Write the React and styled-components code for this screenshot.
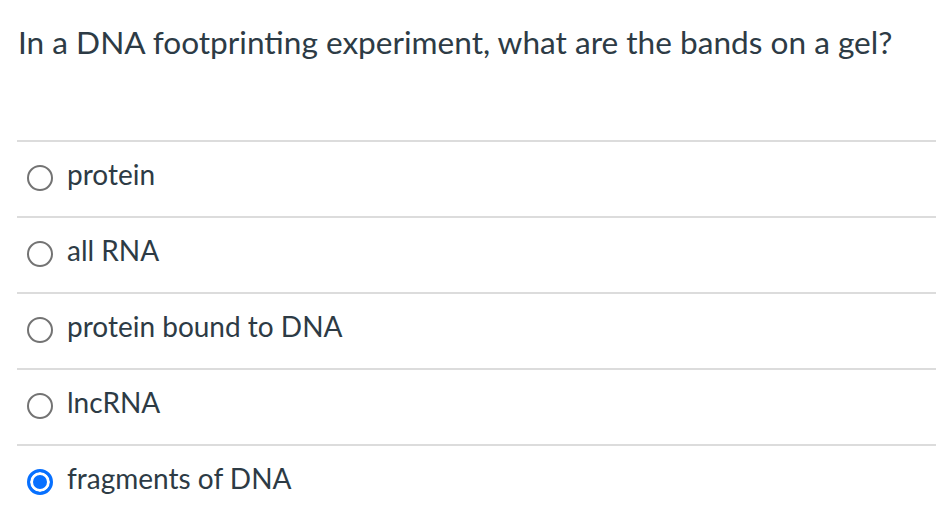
import React, { useState } from "react";
import styled, { createGlobalStyle } from "styled-components";

const GlobalStyle = createGlobalStyle`
  body {
    margin: 0;
    background: #fff;
    font-family: "Lato", "Liberation Sans", sans-serif;
    color: #2d3b45;
  }
`;

const Page = styled.div`
  padding-left: 17px;
`;

const Question = styled.h1`
  margin: 0;
  padding: 22px 0 0 1px;
  height: 140px;
  box-sizing: border-box;
  font-size: 31.6px;
  font-weight: 400;
  line-height: 40px;
  color: #2d3b45;
`;

const Answers = styled.div`
  display: flex;
  flex-direction: column;
`;

const Answer = styled.label`
  display: flex;
  align-items: center;
  gap: 14px;
  height: 76px;
  box-sizing: border-box;
  border-top: 2px solid #dcdcdc;
  padding: 0 0 11px 10px;
  font-size: 28px;
  cursor: pointer;
`;

const Radio = styled.span`
  width: 26px;
  height: 26px;
  box-sizing: border-box;
  border-radius: 50%;
  border: ${(p) => (p.$checked ? "3px solid #0770ff" : "2px solid #737373")};
  background: ${(p) => (p.$checked ? "#0770ff" : "#fff")};
  box-shadow: ${(p) => (p.$checked ? "inset 0 0 0 3px #fff" : "none")};
  flex-shrink: 0;
  margin-top: 8px;
`;

const options = ["protein", "all RNA", "protein bound to DNA", "lncRNA", "fragments of DNA"];

const App = () => {
  const [selected, setSelected] = useState(4);

  return (
    <Page>
      <GlobalStyle />
      <Question>In a DNA footprinting experiment, what are the bands on a gel?</Question>
      <Answers>
        {options.map((opt, index) => (
          <Answer key={opt} onClick={() => setSelected(index)}>
            <Radio $checked={selected === index} />
            {opt}
          </Answer>
        ))}
      </Answers>
    </Page>
  );
};

export default App;
